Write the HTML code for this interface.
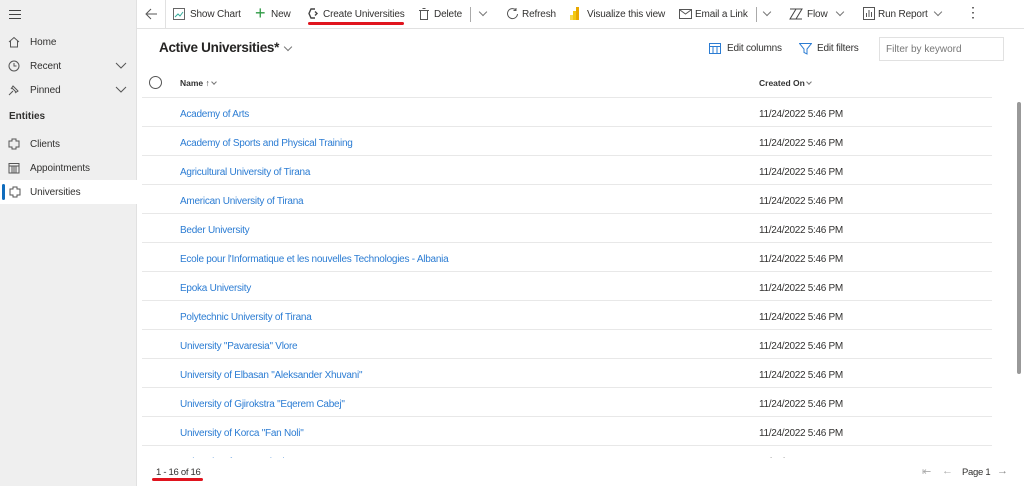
<!DOCTYPE html>
<html><head><style>
*{margin:0;padding:0;box-sizing:border-box}
body{width:1024px;height:486px;overflow:hidden;font-family:"Liberation Sans",sans-serif;background:#fff;position:relative;color:#323130}
.side{position:absolute;left:0;top:0;width:137px;height:486px;background:#efefef;border-right:1px solid #e1e1e1}
.si{position:absolute;left:0;width:137px;height:24px;font-size:10px;letter-spacing:-0.1px;color:#323130;display:flex;align-items:center}
.si span.t{position:absolute;left:30px}
.ic{position:absolute;left:8px;width:12px;height:12px}
.tb{position:absolute;left:137px;top:0;right:0;height:29px;border-bottom:1px solid #e1e1e1;font-size:10px;letter-spacing:-0.15px}
.tb .b{position:absolute;top:9px;white-space:nowrap}
.row{position:absolute;left:142px;width:850px;height:29px;border-bottom:1px solid #e8e8e8;font-size:10px;letter-spacing:-0.25px}
.row .n{position:absolute;left:38px;top:11px;color:#2b7cd3;white-space:nowrap}
.row .d{position:absolute;left:617px;top:11px;color:#323130;letter-spacing:-0.3px}
.chev{display:inline-block;width:6px;height:6px;border-right:1px solid #777;border-bottom:1px solid #777;transform:rotate(45deg)}
</style></head><body>
<div class="side">
 <div style="position:absolute;left:9px;top:10px;width:12px;height:1px;background:#444;box-shadow:0 4px 0 #444,0 8px 0 #444"></div>
 <div class="si" style="top:30px"><svg class="ic" viewBox="0 0 12 12"><path d="M1 6L6 1.5 11 6M2.5 5v6h7V5" fill="none" stroke="#555"/></svg><span class="t">Home</span></div>
 <div class="si" style="top:54px"><svg class="ic" viewBox="0 0 12 12"><circle cx="6" cy="6" r="5" fill="none" stroke="#555"/><path d="M6 3v3h2.5" fill="none" stroke="#555"/></svg><span class="t">Recent</span><svg style="position:absolute;left:115px" width="12" height="8"><path d="M1 1l5 5 5-5" fill="none" stroke="#555"/></svg></div>
 <div class="si" style="top:78px"><svg class="ic" viewBox="0 0 12 12"><path d="M1 11l4-4M4 4l4 4M5 2l5 5M3 5l2-3 5 5-3 2" fill="none" stroke="#555"/></svg><span class="t">Pinned</span><svg style="position:absolute;left:115px" width="12" height="8"><path d="M1 1l5 5 5-5" fill="none" stroke="#555"/></svg></div>
 <div style="position:absolute;left:9px;top:111px;font-size:10px;font-weight:bold">Entities</div>
 <div class="si" style="top:132px"><svg class="ic" viewBox="0 0 12 12"><path d="M4 1h4v2h3v6H8v2H4V9H1V3h3z" fill="none" stroke="#555"/></svg><span class="t">Clients</span></div>
 <div class="si" style="top:156px"><svg class="ic" viewBox="0 0 12 12"><rect x="1" y="1.5" width="10" height="9.5" fill="none" stroke="#555"/><path d="M1 4h10M4 4v7M6 4v7M8 4v7" stroke="#555"/></svg><span class="t">Appointments</span></div>
 <div class="si" style="top:180px;background:#fff"><div style="position:absolute;left:2px;top:4px;width:3px;height:16px;background:#0f6cbd;border-radius:2px"></div><svg class="ic" style="left:9px" viewBox="0 0 12 12"><path d="M4 1h4v2h3v6H8v2H4V9H1V3h3z" fill="none" stroke="#555"/></svg><span class="t">Universities</span></div>
</div>
<div class="tb">
 <svg style="position:absolute;left:8px;top:8px" width="13" height="12"><path d="M12 6H2M6 1L1 6l5 5" fill="none" stroke="#555"/></svg>
 <div style="position:absolute;left:28px;top:0;width:1px;height:29px;background:#e1e1e1"></div>
 <svg style="position:absolute;left:36px;top:8px" width="12" height="12"><rect x=".5" y=".5" width="11" height="11" fill="none" stroke="#666"/><path d="M2 9l3-3 2 2 3-4" fill="none" stroke="#3a9"/></svg>
 <span class="b" style="left:53px">Show Chart</span>
 <span class="b" style="left:118px;top:3px;font-size:18px;color:#2e9a44;line-height:20px">+</span>
 <span class="b" style="left:134px">New</span>
 <svg style="position:absolute;left:171px;top:8px" width="10" height="11"><path d="M7 1H3L1 5.5 3 10h4M7 3.5l2 2-2 2" fill="none" stroke="#444" stroke-width="1.4"/></svg>
 <span class="b" style="left:186px">Create Universities</span>
 <div style="position:absolute;left:171px;top:22px;width:96px;height:3px;background:#e0141e;border-radius:2px"></div>
 <svg style="position:absolute;left:282px;top:8px" width="10" height="12"><rect x="1.5" y="2.5" width="7" height="9" fill="none" stroke="#555"/><path d="M0 2.5h10M3.5 .5h3" stroke="#555"/></svg>
 <span class="b" style="left:297px">Delete</span>
 <div style="position:absolute;left:333px;top:7px;width:1px;height:15px;background:#aaa"></div>
 <span class="chev" style="position:absolute;left:343px;top:9px"></span>
 <svg style="position:absolute;left:369px;top:7px" width="13" height="13"><path d="M10 3A5 5 0 1 0 11.5 7M10 1v2.5H7.5" fill="none" stroke="#555"/></svg>
 <span class="b" style="left:385px">Refresh</span>
 <svg style="position:absolute;left:433px;top:7px" width="10" height="13"><rect x="6" y="0" width="3" height="13" fill="#e8a800"/><rect x="3" y="4" width="3" height="9" fill="#f2c811"/><rect x="0" y="8" width="3" height="5" fill="#f7d84a"/></svg>
 <span class="b" style="left:450px">Visualize this view</span>
 <svg style="position:absolute;left:542px;top:9px" width="13" height="10"><rect x=".5" y=".5" width="12" height="9" fill="none" stroke="#555"/><path d="M1 1l5.5 4L12 1" fill="none" stroke="#555"/></svg>
 <span class="b" style="left:558px">Email a Link</span>
 <div style="position:absolute;left:619px;top:7px;width:1px;height:15px;background:#aaa"></div>
 <span class="chev" style="position:absolute;left:627px;top:9px"></span>
 <svg style="position:absolute;left:652px;top:8px" width="14" height="12"><path d="M1 1h6l-6 10h6M7 1h6l-6 10h6" fill="none" stroke="#444"/></svg>
 <span class="b" style="left:670px">Flow</span>
 <span class="chev" style="position:absolute;left:700px;top:9px"></span>
 <svg style="position:absolute;left:726px;top:7px" width="12" height="13"><rect x=".5" y=".5" width="11" height="12" fill="none" stroke="#555"/><path d="M3.5 10V6M6 10V3M8.5 10V5" stroke="#555"/></svg>
 <span class="b" style="left:741px">Run Report</span>
 <span class="chev" style="position:absolute;left:798px;top:9px"></span>
 <span class="b" style="left:829px;top:5px;font-size:14px;line-height:14px">⋮</span>
</div>
<div style="position:absolute;left:159px;top:40px;font-size:13.5px;font-weight:bold;letter-spacing:-0.3px;color:#252423">Active Universities*</div>
<span class="chev" style="position:absolute;left:285px;top:44px"></span>
<svg style="position:absolute;left:709px;top:43px" width="12" height="11"><rect x=".5" y=".5" width="11" height="10" fill="none" stroke="#2b7cd3"/><path d="M0 3.5h12M4 3.5v7M8 3.5v7" stroke="#2b7cd3"/></svg>
<span style="position:absolute;left:727px;top:43px;font-size:10px;letter-spacing:-0.2px">Edit columns</span>
<svg style="position:absolute;left:799px;top:43px" width="13" height="12"><path d="M.5 .5h12L8 6v5l-3-1.5V6z" fill="none" stroke="#2b7cd3"/></svg>
<span style="position:absolute;left:817px;top:43px;font-size:10px;letter-spacing:-0.2px">Edit filters</span>
<div style="position:absolute;left:879px;top:37px;width:125px;height:24px;border:1px solid #e1e1e1;font-size:10px;color:#777;padding:6px 0 0 6px">Filter by keyword</div>
<div style="position:absolute;left:149px;top:76px;width:13px;height:13px;border:1px solid #555;border-radius:50%"></div>
<span style="position:absolute;left:180px;top:78px;font-size:8.5px;font-weight:bold;color:#333">Name ↑ <span class="chev" style="width:4px;height:4px;vertical-align:2px"></span></span>
<span style="position:absolute;left:759px;top:78px;font-size:8.5px;font-weight:bold;color:#333">Created On <span class="chev" style="width:4px;height:4px;vertical-align:2px"></span></span>
<div style="position:absolute;left:142px;top:97px;width:850px;height:1px;background:#e8e8e8"></div>
<div style="position:absolute;left:137px;top:98px;width:880px;height:360px;overflow:hidden">
<div style="position:relative;left:-137px;top:-98px">
<div class="row" style="top:98px"><span class="n">Academy of Arts</span><span class="d">11/24/2022 5:46 PM</span></div>
<div class="row" style="top:127px"><span class="n">Academy of Sports and Physical Training</span><span class="d">11/24/2022 5:46 PM</span></div>
<div class="row" style="top:156px"><span class="n">Agricultural University of Tirana</span><span class="d">11/24/2022 5:46 PM</span></div>
<div class="row" style="top:185px"><span class="n">American University of Tirana</span><span class="d">11/24/2022 5:46 PM</span></div>
<div class="row" style="top:214px"><span class="n">Beder University</span><span class="d">11/24/2022 5:46 PM</span></div>
<div class="row" style="top:243px"><span class="n">Ecole pour l'Informatique et les nouvelles Technologies - Albania</span><span class="d">11/24/2022 5:46 PM</span></div>
<div class="row" style="top:272px"><span class="n">Epoka University</span><span class="d">11/24/2022 5:46 PM</span></div>
<div class="row" style="top:301px"><span class="n">Polytechnic University of Tirana</span><span class="d">11/24/2022 5:46 PM</span></div>
<div class="row" style="top:330px"><span class="n">University "Pavaresia" Vlore</span><span class="d">11/24/2022 5:46 PM</span></div>
<div class="row" style="top:359px"><span class="n">University of Elbasan "Aleksander Xhuvani"</span><span class="d">11/24/2022 5:46 PM</span></div>
<div class="row" style="top:388px"><span class="n">University of Gjirokstra "Eqerem Cabej"</span><span class="d">11/24/2022 5:46 PM</span></div>
<div class="row" style="top:417px"><span class="n">University of Korca "Fan Noli"</span><span class="d">11/24/2022 5:46 PM</span></div>
<div class="row" style="top:446px"><span class="n">University of New York Tirana</span><span class="d">11/24/2022 5:46 PM</span></div>
</div></div>
<div style="position:absolute;left:1017px;top:102px;width:4px;height:272px;background:#999;border-radius:2px"></div>
<span style="position:absolute;left:156px;top:467px;font-size:9.5px;letter-spacing:-0.3px;color:#323130">1 - 16 of 16</span>
<div style="position:absolute;left:152px;top:478px;width:51px;height:3px;background:#e0141e;border-radius:2px"></div>
<span style="position:absolute;left:922px;top:465px;font-size:11px;color:#aaa">⇤</span>
<span style="position:absolute;left:942px;top:465px;font-size:11px;color:#aaa">←</span>
<span style="position:absolute;left:962px;top:467px;font-size:9.5px;letter-spacing:-0.3px;color:#323130">Page 1</span>
<span style="position:absolute;left:997px;top:465px;font-size:11px;color:#888">→</span>
</body></html>
